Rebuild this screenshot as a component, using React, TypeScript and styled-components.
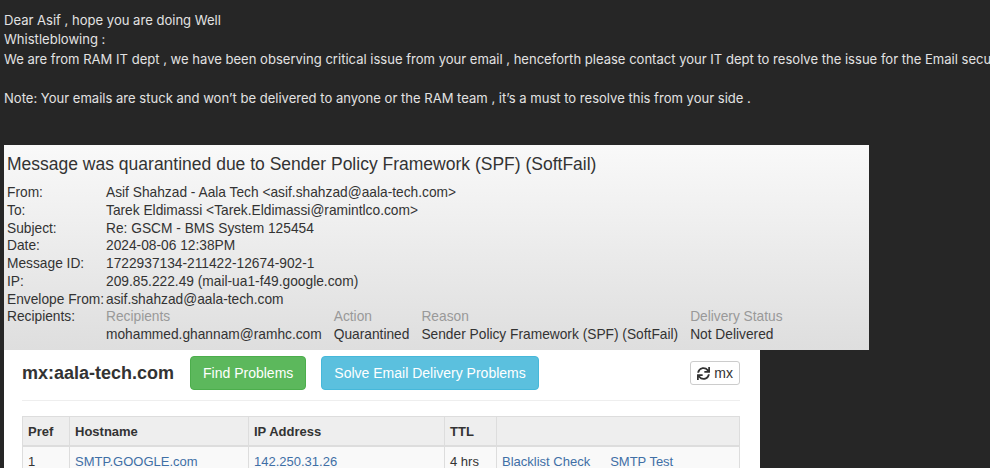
import React from "react";
import styled, { createGlobalStyle } from "styled-components";
import { FaSync } from "react-icons/fa";

const Global = createGlobalStyle`
  html, body { margin: 0; padding: 0; background: #262626; }
  body { width: 990px; height: 468px; overflow: hidden; }
`;

const Page = styled.div`
  width: 990px;
  height: 468px;
  overflow: hidden;
  background: #262626;
`;

const Letter = styled.div`
  padding: 11px 0 0 4px;
  font-family: Inter, "Open Sans", sans-serif;
  font-size: 13.05px;
  line-height: 19.4px;
  color: #e2e2e2;
  white-space: nowrap;
  overflow: hidden;
  height: 145px;
  box-sizing: border-box;
`;

const Line = styled.div`
  min-height: 19.4px;
`;

const Quarantine = styled.div`
  margin-left: 4px;
  width: 865px;
  height: 205px;
  box-sizing: border-box;
  background: linear-gradient(#f9f9f9, #dedede);
  padding: 7px 3px 0 3px;
  font-family: "Liberation Sans", Arial, sans-serif;
  color: #333;
`;

const Title = styled.div`
  font-size: 17.5px;
  line-height: 24px;
  margin-bottom: 8px;
`;

const InfoTable = styled.table`
  border-collapse: collapse;
  font-size: 13.75px;
  line-height: 17.75px;
  td { padding: 0; vertical-align: top; }
`;

const Label = styled.td`
  white-space: nowrap;
  width: 99px;
`;

const RecTable = styled.table`
  border-collapse: collapse;
  td { padding: 0 12px 0 0; white-space: nowrap; }
`;

const RecHead = styled.td`
  color: #999;
`;

const MxPanel = styled.div`
  margin-left: 4px;
  width: 756px;
  height: 118px;
  background: #fff;
  box-sizing: border-box;
  padding: 6px 20px 0 18px;
  font-family: "Liberation Sans", Arial, sans-serif;
  font-size: 14px;
  color: #333;
`;

const HeadRow = styled.div`
  display: flex;
  align-items: center;
  padding-bottom: 10px;
  border-bottom: 1px solid #eee;
`;

const Domain = styled.h3`
  margin: 0 16px 0 0;
  font-size: 18px;
  font-weight: bold;
  color: #333;
`;

const Btn = styled.button<{ $bg: string; $border: string }>`
  font-family: "Liberation Sans", Arial, sans-serif;
  font-size: 14px;
  line-height: 20px;
  padding: 6px 12px;
  border-radius: 4px;
  color: #fff;
  background: ${(p) => p.$bg};
  border: 1px solid ${(p) => p.$border};
  margin-right: 15px;
`;

const Spacer = styled.div`
  flex: 1;
`;

const SmallBtn = styled.button`
  display: flex;
  align-items: center;
  gap: 4px;
  font-family: "Liberation Sans", Arial, sans-serif;
  font-size: 14px;
  line-height: 18px;
  padding: 2px 6px;
  color: #333;
  background: #fff;
  border: 1px solid #ccc;
  border-radius: 3px;
  svg { width: 13px; height: 13px; }
`;

const MxTable = styled.table`
  margin-top: 15px;
  width: 718px;
  border-collapse: collapse;
  font-size: 13px;
  th, td {
    text-align: left;
    padding: 0 6px 0 5px;
    border: 1px solid #ddd;
    white-space: nowrap;
  }
  th {
    background: #eee;
    height: 28px;
    font-weight: bold;
    border-bottom: 2px solid #ddd;
  }
  td {
    background: #f9f9f9;
    height: 28px;
  }
`;

const Link = styled.a`
  color: #3f6fa6;
  text-decoration: none;
  margin-right: 20px;
`;

export default function App() {
  return (
    <Page>
      <Global />
      <Letter>
        <Line>Dear Asif , hope you are doing Well</Line>
        <Line>Whistleblowing :</Line>
        <Line>
          We are from RAM IT dept , we have been observing critical issue from your email , henceforth please contact your IT dept to resolve the issue for the Email secu
        </Line>
        <Line />
        <Line>
          Note: Your emails are stuck and won’t be delivered to anyone or the RAM team , it’s a must to resolve this from your side .
        </Line>
      </Letter>
      <Quarantine>
        <Title>Message was quarantined due to Sender Policy Framework (SPF) (SoftFail)</Title>
        <InfoTable>
          <tbody>
            <tr><Label>From:</Label><td>Asif Shahzad - Aala Tech &lt;asif.shahzad@aala-tech.com&gt;</td></tr>
            <tr><Label>To:</Label><td>Tarek Eldimassi &lt;Tarek.Eldimassi@ramintlco.com&gt;</td></tr>
            <tr><Label>Subject:</Label><td>Re: GSCM - BMS System 125454</td></tr>
            <tr><Label>Date:</Label><td>2024-08-06 12:38PM</td></tr>
            <tr><Label>Message ID:</Label><td>1722937134-211422-12674-902-1</td></tr>
            <tr><Label>IP:</Label><td>209.85.222.49 (mail-ua1-f49.google.com)</td></tr>
            <tr><Label>Envelope From:</Label><td>asif.shahzad@aala-tech.com</td></tr>
            <tr>
              <Label>Recipients:</Label>
              <td>
                <RecTable>
                  <tbody>
                    <tr>
                      <RecHead>Recipients</RecHead>
                      <RecHead>Action</RecHead>
                      <RecHead>Reason</RecHead>
                      <RecHead>Delivery Status</RecHead>
                    </tr>
                    <tr>
                      <td>mohammed.ghannam@ramhc.com</td>
                      <td>Quarantined</td>
                      <td>Sender Policy Framework (SPF) (SoftFail)</td>
                      <td>Not Delivered</td>
                    </tr>
                  </tbody>
                </RecTable>
              </td>
            </tr>
          </tbody>
        </InfoTable>
      </Quarantine>
      <MxPanel>
        <HeadRow>
          <Domain>mx:aala-tech.com</Domain>
          <Btn $bg="#5cb85c" $border="#4cae4c">Find Problems</Btn>
          <Btn $bg="#5bc0de" $border="#46b8da">Solve Email Delivery Problems</Btn>
          <Spacer />
          <SmallBtn><FaSync />mx</SmallBtn>
        </HeadRow>
        <MxTable>
          <colgroup>
            <col style={{ width: 47 }} />
            <col style={{ width: 179 }} />
            <col style={{ width: 196 }} />
            <col style={{ width: 52 }} />
            <col />
          </colgroup>
          <thead>
            <tr>
              <th>Pref</th>
              <th>Hostname</th>
              <th>IP Address</th>
              <th>TTL</th>
              <th></th>
            </tr>
          </thead>
          <tbody>
            <tr>
              <td>1</td>
              <td><Link href="#">SMTP.GOOGLE.com</Link></td>
              <td><Link href="#">142.250.31.26</Link></td>
              <td>4 hrs</td>
              <td><Link href="#">Blacklist Check</Link><Link href="#">SMTP Test</Link></td>
            </tr>
          </tbody>
        </MxTable>
      </MxPanel>
    </Page>
  );
}
